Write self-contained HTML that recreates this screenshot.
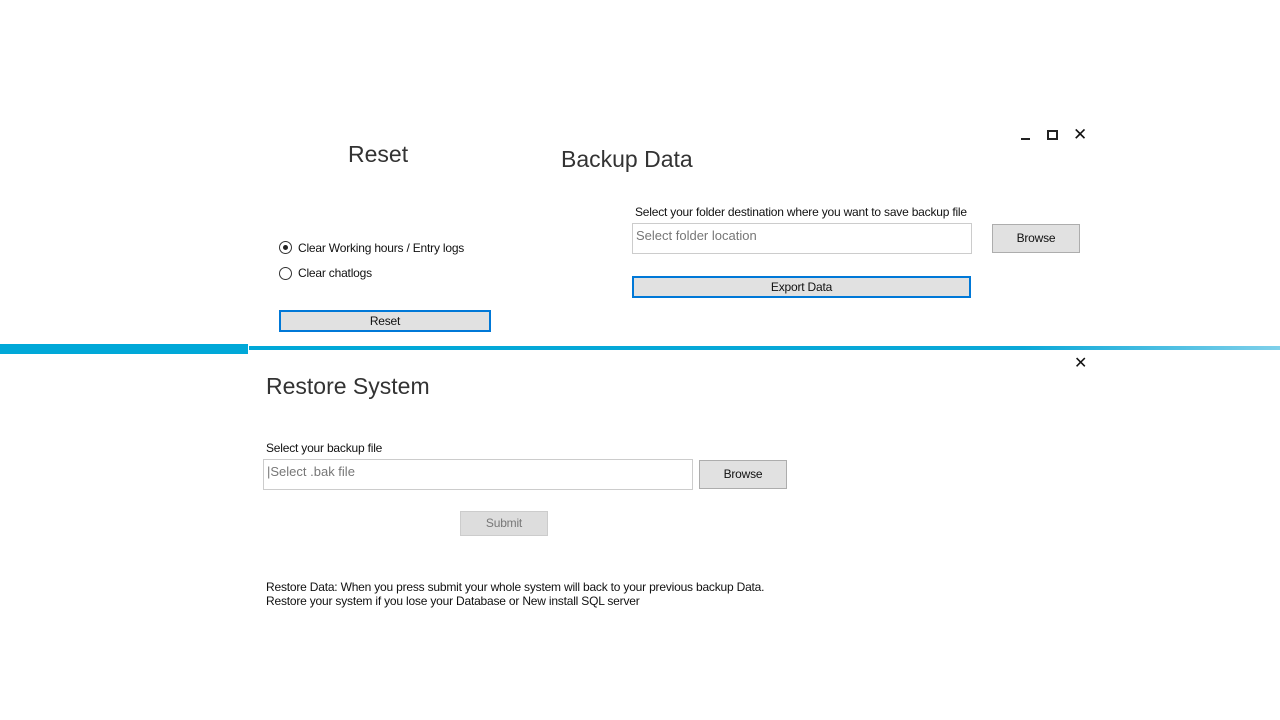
<!DOCTYPE html>
<html><head><meta charset="utf-8"><style>
body{margin:0;width:1280px;height:720px;background:#fff;position:relative;overflow:hidden;font-family:"Liberation Sans",sans-serif;color:#111}
.a{position:absolute;white-space:nowrap}
.t{font-size:23px;color:#333;font-weight:normal}
.s{font-size:12px;letter-spacing:-0.2px}
.btn{position:absolute;background:#e1e1e1;border:1px solid #adadad;box-sizing:border-box;font-size:12px;text-align:center;letter-spacing:-0.2px}
.bb{border:2px solid #0078d7}
.inp{position:absolute;border:1px solid #ccc;box-sizing:border-box;background:#fff;font-size:13px;color:#777;padding:5px 0 0 3px}
.r{position:absolute;width:13px;height:13px;border:1px solid #333;border-radius:50%;box-sizing:border-box}
</style></head><body>
<div class="a t" style="left:348px;top:141px">Reset</div>
<div class="a t" style="left:561px;top:146px">Backup Data</div>
<div class="a" style="left:1021px;top:138px;width:9px;height:2px;background:#222"></div>
<div class="a" style="left:1047px;top:130px;width:11px;height:10px;border:2px solid #222;box-sizing:border-box"></div>
<div class="a" style="left:1073px;top:125px;font-size:17px">✕</div>

<div class="r" style="left:279px;top:241px"><div style="position:absolute;left:3px;top:3px;width:5px;height:5px;border-radius:50%;background:#222"></div></div>
<div class="a s" style="left:298px;top:241px">Clear Working hours / Entry logs</div>
<div class="r" style="left:279px;top:267px"></div>
<div class="a s" style="left:298px;top:266px">Clear chatlogs</div>
<div class="btn bb" style="left:279px;top:310px;width:212px;height:22px;line-height:18px">Reset</div>

<div class="a s" style="left:635px;top:205px">Select your folder destination where you want to save backup file</div>
<div class="inp" style="left:632px;top:223px;width:340px;height:31px;padding-top:4px">Select folder location</div>
<div class="btn" style="left:992px;top:224px;width:88px;height:29px;line-height:27px">Browse</div>
<div class="btn bb" style="left:632px;top:276px;width:339px;height:22px;line-height:18px">Export Data</div>

<div class="a" style="left:0;top:344px;width:248px;height:10px;background:#00a8d8"></div>
<div class="a" style="left:249px;top:346px;width:1031px;height:4px;background:linear-gradient(90deg,#00a8d8 0%,#0aa8d8 75%,#7fd0ea 100%)"></div>
<div class="a" style="left:1074px;top:353px;font-size:16px">✕</div>

<div class="a t" style="left:266px;top:373px">Restore System</div>
<div class="a s" style="left:266px;top:441px">Select your backup file</div>
<div class="inp" style="left:263px;top:459px;width:430px;height:31px;padding-top:4px">|Select .bak file</div>
<div class="btn" style="left:699px;top:460px;width:88px;height:29px;line-height:27px">Browse</div>
<div class="btn" style="left:460px;top:511px;width:88px;height:25px;line-height:23px;color:#777;background:#ddd;border-color:#ccc">Submit</div>
<div class="a s" style="left:266px;top:580px;line-height:14px">Restore Data: When you press submit your whole system will back to your previous backup Data.<br>Restore your system if you lose your Database or New install SQL server</div>
</body></html>
